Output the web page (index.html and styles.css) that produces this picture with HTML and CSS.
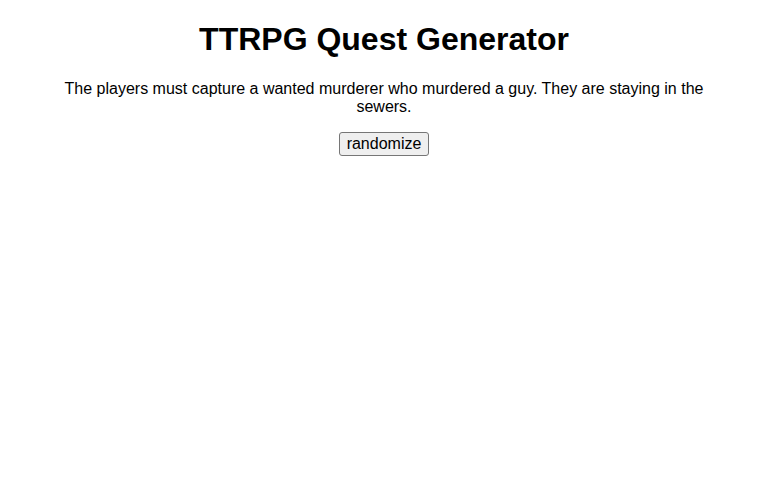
FILE: index.html
```html
<!DOCTYPE html>
<html lang="en">
<head>
<meta charset="utf-8">
<title>TTRPG Quest Generator</title>
<link rel="stylesheet" href="styles.css">
</head>
<body>
<main class="app">
  <h1 class="title">TTRPG Quest Generator</h1>
  <p class="quest">The players must capture a wanted murderer who murdered a guy. They are staying in the sewers.</p>
  <button class="randomize" type="button">randomize</button>
</main>
</body>
</html>
```
FILE: styles.css
```css
body {
  margin: 8px;
  background: #fff;
  color: #000;
  font-family: "Liberation Sans", Arial, sans-serif;
}

.app {
  max-width: 640px;
  margin: 0 auto;
  display: flex;
  flex-direction: column;
  align-items: center;
  text-align: center;
}

.title {
  font-size: 32px;
  font-weight: bold;
  margin: 13px 0 22px;
}

.quest {
  font-size: 16px;
  line-height: 18px;
  margin: 0 0 16px;
}

.randomize {
  font-family: "Liberation Sans", Arial, sans-serif;
  font-size: 16px;
  line-height: 18px;
  color: #000;
  background: #efefef;
  border: 1px solid #767676;
  border-radius: 3px;
  padding: 2px 7px;
}
```
